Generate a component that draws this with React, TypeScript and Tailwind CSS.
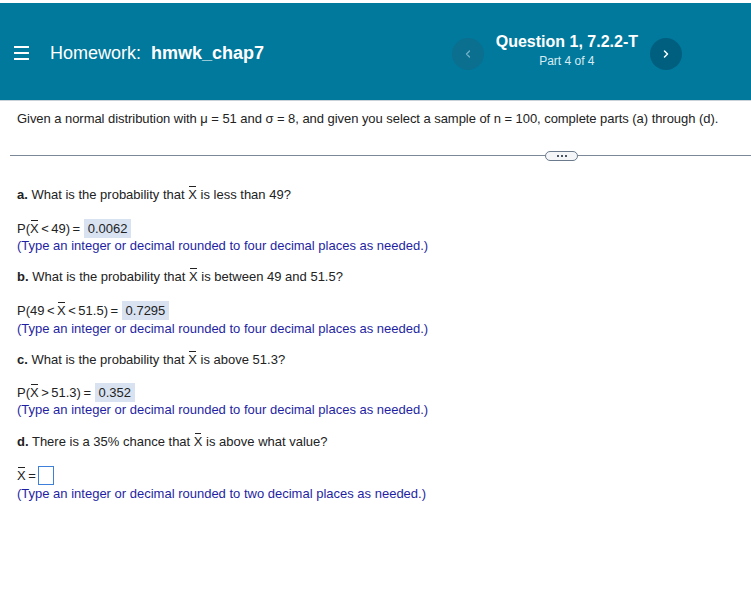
import { ChevronLeft, ChevronRight } from "lucide-react";

function XBar() {
  return (
    <span className="relative inline-block">
      X
      <span className="absolute left-[1px] right-[1px] top-[-1px] h-[1px] bg-[#222]" />
    </span>
  );
}

function Hint({ text }: { text: string }) {
  return <div className="leading-[16px] text-[#1f1fa3]">{text}</div>;
}

function Answer({ value }: { value: string }) {
  return (
    <span className="ml-[1px] inline-flex h-[19px] items-center bg-[#d9e2f1] px-[4px]">{value}</span>
  );
}

function Op({ c }: { c: string }) {
  return <span className="mx-[2.5px]">{c}</span>;
}

export default function App() {
  return (
    <div className="min-h-[611px] w-full bg-white text-[13px] text-[#222]" style={{ fontFamily: '"Liberation Sans", Arial, sans-serif' }}>
      {/* Header */}
      <header className="mt-[3px] flex h-[98px] items-center border-b border-[#c9d1d9] bg-[#00799c] text-white">
        <div className="flex items-center pl-[14px] pt-[3px]">
          <div className="flex w-[15px] flex-col gap-[4px]">
            <span className="h-[2px] bg-white" />
            <span className="h-[2px] bg-white" />
            <span className="h-[2px] bg-white" />
          </div>
          <div className="ml-[21px] text-[18px] leading-[20px]">
            Homework: <span className="ml-[5px] font-bold">hmwk_chap7</span>
          </div>
        </div>
        <div className="ml-auto mr-[69px] flex items-center pt-[4px]">
          <button className="flex h-[32px] w-[32px] items-center justify-center rounded-full bg-[#0b6f8f] text-[#6fb3c9]">
            <ChevronLeft className="h-[12px] w-[12px]" strokeWidth={2.5} />
          </button>
          <div className="mx-[12px] flex flex-col items-center whitespace-nowrap pb-[7px]">
            <div className="text-[16px] font-bold leading-[19px]">Question 1, 7.2.2-T</div>
            <div className="mt-[3px] text-[12px] leading-[14px] text-[#d8ecf3]">Part 4 of 4</div>
          </div>
          <button className="flex h-[32px] w-[32px] items-center justify-center rounded-full bg-[#005f7f] text-white">
            <ChevronRight className="h-[12px] w-[12px]" strokeWidth={3} />
          </button>
        </div>
      </header>

      {/* Question stem */}
      <div className="mt-[10px] pl-[17px] leading-[16px] tracking-[-0.05px]">
        Given a normal distribution with μ = 51 and σ = 8, and given you select a sample of n = 100, complete parts (a) through (d).
      </div>

      {/* Divider */}
      <div className="mt-[23px] ml-[10px] flex h-[11px] items-center">
        <div className="h-[1px] w-[535px] bg-[#7b8898]" />
        <div className="flex h-[10px] w-[33px] items-center justify-center gap-[2px] rounded-full border-[1.5px] border-[#6b7a8c] bg-[#f4f6f8]">
          <span className="h-[2px] w-[2px] bg-[#4b5563]" />
          <span className="h-[2px] w-[2px] bg-[#4b5563]" />
          <span className="h-[2px] w-[2px] bg-[#4b5563]" />
        </div>
        <div className="h-[1px] flex-1 bg-[#7b8898]" />
      </div>

      <div className="pl-[17px]">
        {/* a */}
        <div className="mt-[26px] leading-[16px]">
          <span className="font-bold">a.</span> What is the probability that <XBar /> is less than 49?
        </div>
        <div className="mt-[16px] flex items-center leading-[16px]">
          <span>
            P(<XBar />
            <Op c="<" />
            49)
            <Op c="=" />
          </span>
          <Answer value="0.0062" />
        </div>
        <Hint text="(Type an integer or decimal rounded to four decimal places as needed.)" />

        {/* b */}
        <div className="mt-[15px] leading-[16px]">
          <span className="font-bold">b.</span> What is the probability that <XBar /> is between 49 and 51.5?
        </div>
        <div className="mt-[16px] flex items-center leading-[16px]">
          <span>
            P(49
            <Op c="<" />
            <XBar />
            <Op c="<" />
            51.5)
            <Op c="=" />
          </span>
          <Answer value="0.7295" />
        </div>
        <div className="mt-[1px]">
          <Hint text="(Type an integer or decimal rounded to four decimal places as needed.)" />
        </div>

        {/* c */}
        <div className="mt-[15px] leading-[16px]">
          <span className="font-bold">c.</span> What is the probability that <XBar /> is above 51.3?
        </div>
        <div className="mt-[15px] flex items-center leading-[16px]">
          <span>
            P(<XBar />
            <Op c=">" />
            51.3)
            <Op c="=" />
          </span>
          <Answer value="0.352" />
        </div>
        <Hint text="(Type an integer or decimal rounded to four decimal places as needed.)" />

        {/* d */}
        <div className="mt-[16px] leading-[16px]">
          <span className="font-bold">d.</span> There is a 35% chance that <XBar /> is above what value?
        </div>
        <div className="mt-[16px] flex items-center leading-[16px]">
          <span>
            <XBar />
            <Op c="=" />
          </span>
          <span className="h-[19px] w-[16px] border-[1.5px] border-[#3d7fd9] bg-white" />
        </div>
        <div className="mt-[1px]">
          <Hint text="(Type an integer or decimal rounded to two decimal places as needed.)" />
        </div>
      </div>
    </div>
  );
}
